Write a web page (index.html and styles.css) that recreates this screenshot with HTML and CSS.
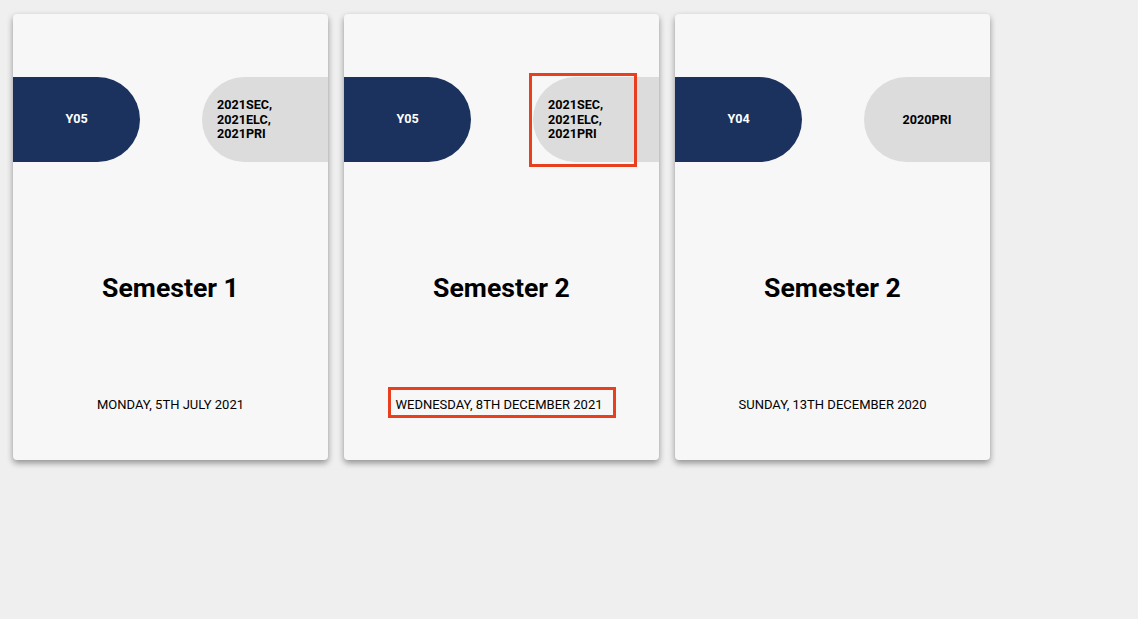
FILE: index.html
```html
<!DOCTYPE html>
<html lang="en">
<head>
    <meta charset="UTF-8">
    <meta name="viewport" content="width=device-width, initial-scale=1.0">
    <title>Semesters</title>
    <link rel="stylesheet" href="styles.css">
</head>
<body>
    <div class="card-list">
        <div class="card">
            <div class="tags">
                <div class="tag tag-year">Y05</div>
                <div class="tag tag-group"><span>2021SEC, 2021ELC, 2021PRI</span></div>
            </div>
            <h2 class="title">Semester 1</h2>
            <div class="date"><span>Monday, 5th July 2021</span></div>
        </div>

        <div class="card">
            <div class="tags">
                <div class="tag tag-year">Y05</div>
                <div class="tag tag-group marked"><span>2021SEC, 2021ELC, 2021PRI</span></div>
            </div>
            <h2 class="title">Semester 2</h2>
            <div class="date"><span class="marked-date">Wednesday, 8th December 2021</span></div>
        </div>

        <div class="card">
            <div class="tags">
                <div class="tag tag-year">Y04</div>
                <div class="tag tag-group"><span>2020PRI</span></div>
            </div>
            <h2 class="title">Semester 2</h2>
            <div class="date"><span>Sunday, 13th December 2020</span></div>
        </div>
    </div>
</body>
</html>
```

FILE: styles.css
```css
body {
    margin: 0;
    background-color: #efefef;
    font-family: Roboto, "Liberation Sans", sans-serif;
    color: #000;
}
.card-list {
    display: flex;
    gap: 16px;
    padding: 14px 13px;
}
.card {
    width: 315px;
    height: 446px;
    background: #f7f7f7;
    border-radius: 4px;
    box-shadow: 0 3px 6px rgba(0, 0, 0, 0.4);
    display: flex;
    flex-direction: column;
    padding-top: 63px;
    box-sizing: border-box;
}
.tags {
    display: flex;
    justify-content: space-between;
    height: 85px;
}
.tag {
    width: 127px;
    display: flex;
    align-items: center;
    justify-content: center;
    box-sizing: border-box;
    font-size: 12.6px;
    font-weight: 700;
    line-height: 14.6px;
}
.tag-year {
    background-color: #1b325e;
    color: #fff;
    border-radius: 0 43px 43px 0;
}
.tag-group {
    width: 126px;
    background-color: #dcdcdc;
    border-radius: 43px 0 0 43px;
    padding: 1px 15px 0;
    position: relative;
}
.marked::after {
    content: "";
    position: absolute;
    left: -4px;
    top: -4px;
    width: 108px;
    height: 94px;
    box-sizing: border-box;
    border: 3px solid #e8401f;
}
.title {
    margin: 111px 0 0;
    text-align: center;
    font-size: 26.6px;
    line-height: 30px;
    font-weight: 700;
}
.date {
    margin-top: 84px;
    text-align: center;
    font-size: 13px;
    line-height: 16px;
    text-transform: uppercase;
}
.date span {
    display: inline-block;
    padding: 7px 8px 2px;
    border: 3px solid transparent;
}
.date .marked-date {
    border-color: #e8401f;
    padding: 7px 10px 2px 5px;
}
```
